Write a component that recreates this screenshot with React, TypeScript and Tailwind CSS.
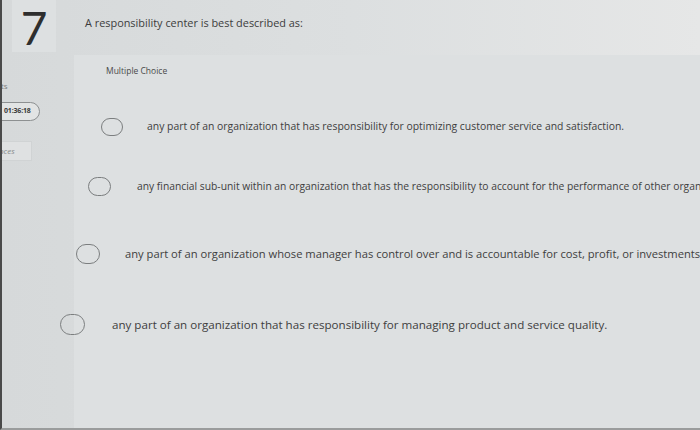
import React from 'react';

const options = [
  {
    text: 'any part of an organization that has responsibility for optimizing customer service and satisfaction.',
    indent: '-ml-[5px]',
    gap: 'gap-[24px]',
    size: 'text-[10.4px]',
    top: 'mt-[40px]',
    ring: 'w-[22px] h-[18px]',
  },
  {
    text: 'any financial sub-unit within an organization that has the responsibility to account for the performance of other organizational units.',
    indent: '-ml-[18px]',
    gap: 'gap-[26px]',
    size: 'text-[10.3px]',
    top: 'mt-[41px]',
    ring: 'w-[23px] h-[19px]',
  },
  {
    text: 'any part of an organization whose manager has control over and is accountable for cost, profit, or investments.',
    indent: '-ml-[30px]',
    gap: 'gap-[25px]',
    size: 'text-[11.2px]',
    top: 'mt-[48px]',
    ring: 'w-[24px] h-[20px]',
  },
  {
    text: 'any part of an organization that has responsibility for managing product and service quality.',
    indent: '-ml-[46px]',
    gap: 'gap-[27px]',
    size: 'text-[11.6px]',
    top: 'mt-[50px]',
    ring: 'w-[25px] h-[21px]',
  },
];

export default function App() {
  return (
    <div
      className="w-[700px] h-[430px] overflow-hidden flex bg-gradient-to-r from-[#d6d9da] via-[#dcdfe0] to-[#e6e7e7] border-l-2 border-[#4a4a4a] border-b-2 border-b-[#9a9c9c]"
      style={{ fontFamily: '"Open Sans", Arial, sans-serif' }}
    >
      {/* Left rail */}
      <div className="w-[62px] shrink-0 flex flex-col">
        <div className="ml-[10px] w-[44px] h-[52px] bg-[#dde0e1] flex justify-center">
          <span className="text-[46px] leading-[46px] text-[#2e2e2e] mt-[5px]" style={{ fontFamily: 'Lato, sans-serif' }}>7</span>
        </div>
        <div className="mt-[30px] text-[8px] text-[#7d8081] leading-none -ml-[1px]">ts</div>
        <div className="mt-[12px] -ml-[12px] w-[50px] h-[19px] rounded-full border border-[#8d9091] bg-[#e2e4e4] flex items-center pl-[13px]">
          <span className="text-[7px] font-bold text-[#3a3a3a] tracking-tight">01:36:18</span>
        </div>
        <div className="mt-[20px] -ml-[4px] w-[34px] h-[20px] border border-[#d0d3d4] bg-[#dfe1e2] flex items-center">
          <span className="text-[8px] italic text-[#868989]">nces</span>
        </div>
      </div>

      {/* Question */}
      <div className="flex-1 flex flex-col">
        <p className="mt-[15px] ml-[21px] text-[10.9px] text-[#3c3c3c] whitespace-nowrap">
          A responsibility center is best described as:
        </p>
        <div className="mt-[24px] ml-[10px] flex-1 bg-[#dde0e1] pt-[10px] pl-[32px]">
          <p className="text-[8.5px] text-[#4a4a4a] whitespace-nowrap">Multiple Choice</p>
          {options.map((o, i) => (
            <div key={i} className={`flex items-center ${o.top} ${o.indent} ${o.gap} whitespace-nowrap`}>
              <span className={`${o.ring} shrink-0 rounded-full border-[1.5px] border-[#7b7e7f]`} />
              <span className={`${o.size} text-[#3e3e3e]`}>{o.text}</span>
            </div>
          ))}
        </div>
      </div>
    </div>
  );
}
